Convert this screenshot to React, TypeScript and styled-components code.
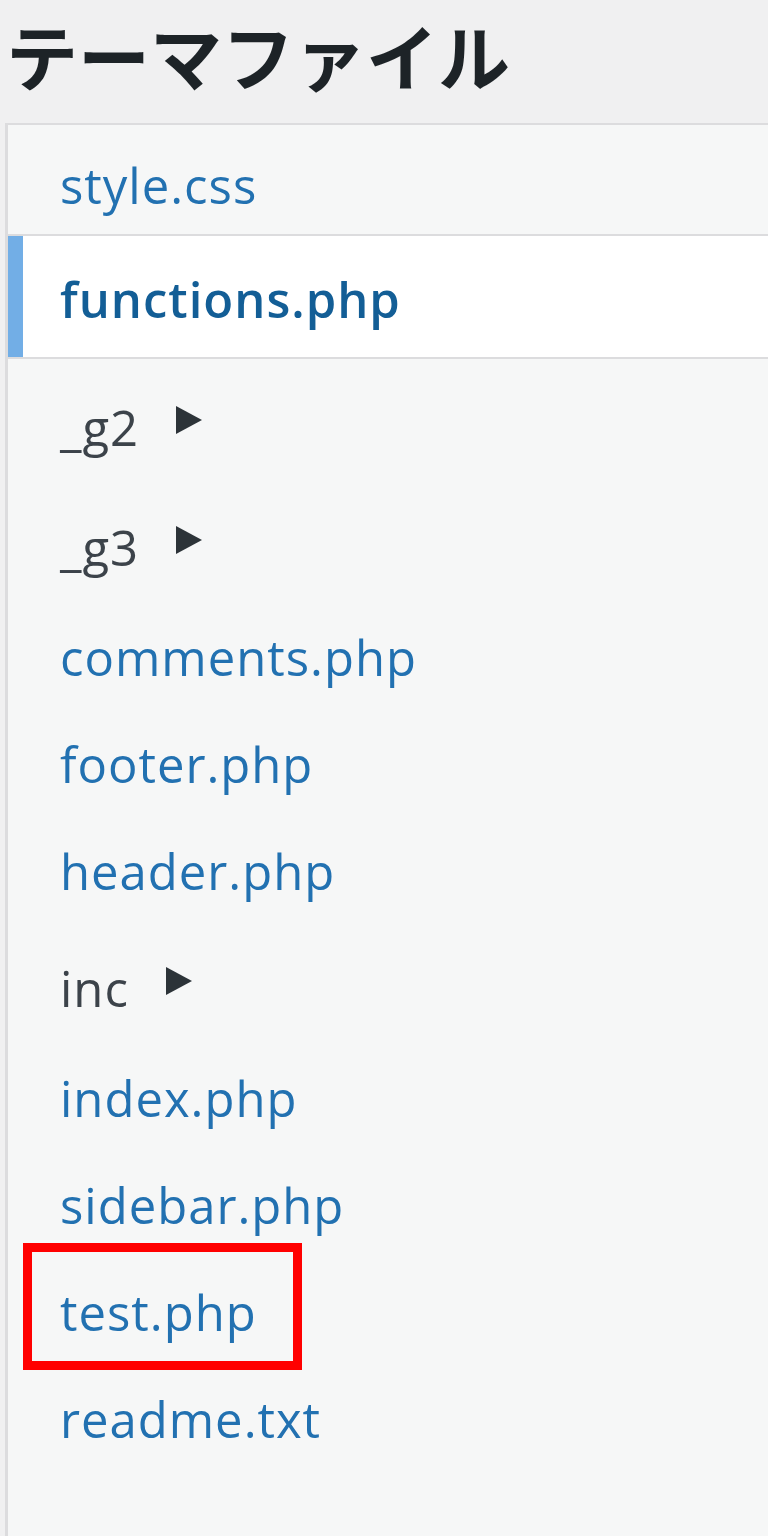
import React from 'react';
import styled, { createGlobalStyle } from 'styled-components';

const GlobalStyle = createGlobalStyle`
  html, body {
    margin: 0;
    padding: 0;
    background: #f0f0f1;
  }
  body {
    width: 768px;
    height: 1536px;
    overflow: hidden;
    font-family: "Open Sans", "Noto Sans", sans-serif;
  }
`;

const Page = styled.div`
  display: flex;
  flex-direction: column;
  height: 1536px;
`;

const Heading = styled.h2`
  margin: 0;
  height: 123px;
  box-sizing: border-box;
  padding: 6px 0 0 6px;
  font-family: "Noto Sans CJK JP", sans-serif;
  font-size: 72px;
  font-weight: 700;
  line-height: 96px;
  color: #1d2327;
`;

const Panel = styled.ul`
  flex: 1;
  margin: 0 0 0 5px;
  padding: 2px 0 0;
  list-style: none;
  background: #f6f7f7;
  border-top: 2px solid #dcdcde;
  border-left: 3px solid #dcdcde;
`;

type Kind = 'file' | 'folder' | 'active';

const rowSpacing: Record<Kind, { top: number; bottom: number }> = {
  file: { top: 25, bottom: 16 },
  folder: { top: 35, bottom: 19 },
  active: { top: 30, bottom: 25 },
};

const Row = styled.li<{ $kind: Kind }>`
  position: relative;
  display: block;
  padding: ${(p) => rowSpacing[p.$kind].top}px 0 ${(p) => rowSpacing[p.$kind].bottom}px 52px;
  font-size: 49px;
  line-height: 66px;
  letter-spacing: 1px;
  white-space: nowrap;
  font-weight: ${(p) => (p.$kind === 'active' ? 600 : 400)};
  color: ${(p) => (p.$kind === 'folder' ? '#3c434a' : p.$kind === 'active' ? '#135e96' : '#2271b1')};
  background: ${(p) => (p.$kind === 'active' ? '#ffffff' : 'transparent')};
  border-top: ${(p) => (p.$kind === 'active' ? '2px solid #dcdcde' : 'none')};
  border-bottom: ${(p) => (p.$kind === 'active' ? '2px solid #dcdcde' : 'none')};
  box-shadow: ${(p) => (p.$kind === 'active' ? 'inset 15px 0 0 #72aee6' : 'none')};
`;

const Caret = styled.span`
  display: inline-block;
  vertical-align: baseline;
  margin-left: 37px;
  margin-bottom: 12px;
  width: 0;
  height: 0;
  border-top: 14px solid transparent;
  border-bottom: 14px solid transparent;
  border-left: 26px solid #2c3338;
`;

const Marker = styled.span`
  position: absolute;
  left: 15px;
  top: -11px;
  width: 279px;
  height: 127px;
  box-sizing: border-box;
  border: 9px solid #ff0000;
`;

type Item = { name: string; kind?: Kind; marked?: boolean };

const items: Item[] = [
  { name: 'style.css' },
  { name: 'functions.php', kind: 'active' },
  { name: '_g2', kind: 'folder' },
  { name: '_g3', kind: 'folder' },
  { name: 'comments.php' },
  { name: 'footer.php' },
  { name: 'header.php' },
  { name: 'inc', kind: 'folder' },
  { name: 'index.php' },
  { name: 'sidebar.php' },
  { name: 'test.php', marked: true },
  { name: 'readme.txt' },
];

const App = () => (
  <Page>
    <GlobalStyle />
    <Heading>テーマファイル</Heading>
    <Panel>
      {items.map((item) => {
        const kind = item.kind ?? 'file';
        return (
          <Row key={item.name} $kind={kind}>
            {item.name}
            {kind === 'folder' && <Caret />}
            {item.marked && <Marker />}
          </Row>
        );
      })}
    </Panel>
  </Page>
);

export default App;
